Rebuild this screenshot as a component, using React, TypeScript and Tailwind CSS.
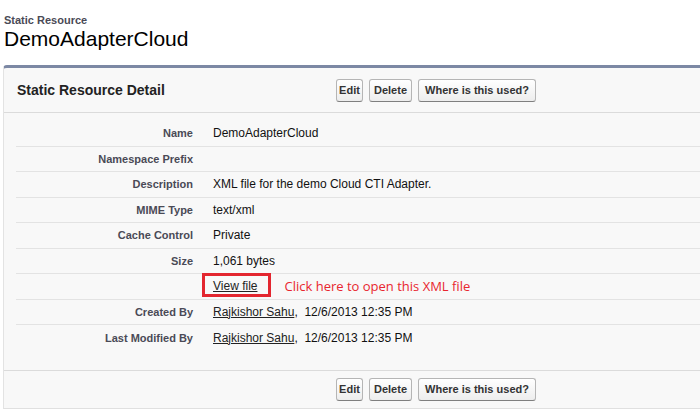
export default function App() {
  const rows: { label: string; value?: string; kind?: 'link' | 'user' }[] = [
    { label: 'Name', value: 'DemoAdapterCloud' },
    { label: 'Namespace Prefix', value: '' },
    { label: 'Description', value: 'XML file for the demo Cloud CTI Adapter.' },
    { label: 'MIME Type', value: 'text/xml' },
    { label: 'Cache Control', value: 'Private' },
    { label: 'Size', value: '1,061 bytes' },
    { label: '', kind: 'link' },
    { label: 'Created By', kind: 'user' },
    { label: 'Last Modified By', kind: 'user' },
  ];

  const buttons = [
    { text: 'Edit', w: 'w-[27px]' },
    { text: 'Delete', w: 'w-[43px]' },
    { text: 'Where is this used?', w: 'w-[118px]' },
  ];

  const Buttons = () => (
    <div className="flex items-center gap-[6px]">
      {buttons.map((b) => (
        <button
          key={b.text}
          className={`${b.w} h-[23px] rounded-[3px] border border-[#b5b5b5] border-b-[#7f7f7f] bg-gradient-to-b from-white to-[#ededed] text-[11px] font-bold text-[#333] leading-none`}
        >
          {b.text}
        </button>
      ))}
    </div>
  );

  return (
    <div className="w-[700px] h-[417px] overflow-hidden bg-white font-['Liberation_Sans',Arial,sans-serif]">
      {/* Page title */}
      <div className="pt-[14px] pl-[4px]">
        <div className="text-[11px] font-bold text-[#4a4a56] leading-[13px]">Static Resource</div>
        <div className="text-[21px] text-black leading-[24px]">DemoAdapterCloud</div>
      </div>

      {/* Detail panel */}
      <div className="mt-[14px] ml-[3px] w-[720px] rounded-t-[4px] border-t-[3px] border-t-[#7c88a4] border-l border-l-[#e3e3e3] border-b border-b-[#e0e0e0] bg-[#f8f8f8]">
        <div className="flex items-center h-[45px] border-b border-[#dbdbdb]">
          <div className="w-[332px] pl-[13px] text-[14px] font-bold text-[#222]">Static Resource Detail</div>
          <Buttons />
        </div>

        <div className="pt-[8px] pl-[12px] pb-[19px] border-b border-[#dbdbdb]">
          {rows.map((r, i) => (
            <div
              key={i}
              className={`flex items-center h-[25.5px] ${i < rows.length - 1 ? 'border-b border-[#e3e3e3]' : ''}`}
            >
              <div className="w-[187px] pr-[10px] text-right text-[11px] font-bold text-[#4a4a56]">{r.label}</div>
              <div className="pl-[10px] text-[12px] text-[#111]">
                {r.kind === 'link' ? (
                  <div className="flex items-center">
                    <span className="relative underline text-[#222]">
                      View file
                      <span className="absolute left-[-11px] top-[-4px] w-[69px] h-[24px] border-[3px] border-[#e3262f]" />
                    </span>
                    <span className="ml-[27px] text-[13px] text-[#e8262f] font-['Open_Sans',sans-serif]">
                      Click here to open this XML file
                    </span>
                  </div>
                ) : r.kind === 'user' ? (
                  <span>
                    <span className="underline text-[#222]">Rajkishor Sahu</span>,&nbsp; 12/6/2013 12:35 PM
                  </span>
                ) : (
                  r.value
                )}
              </div>
            </div>
          ))}
        </div>

        <div className="flex items-center h-[37px]">
          <div className="w-[332px]" />
          <Buttons />
        </div>
      </div>
    </div>
  );
}
